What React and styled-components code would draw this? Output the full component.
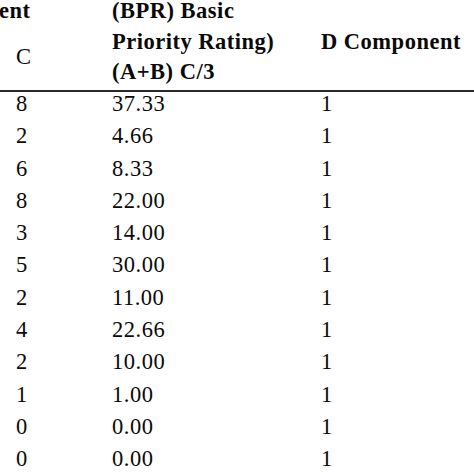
import React from "react";
import styled, { createGlobalStyle } from "styled-components";

const Global = createGlobalStyle`
  html, body { margin: 0; padding: 0; background: #fff; }
  body { width: 474px; height: 474px; overflow: hidden; }
`;

const Table = styled.div`
  width: 474px;
  font-family: "Liberation Serif", "Times New Roman", serif;
  font-size: 22.5px;
  letter-spacing: 0.5px;
  color: #0a0a0a;
`;

const Head = styled.div`
  display: grid;
  grid-template-columns: 112px 209px 1fr;
  margin-top: -4px;
  padding-bottom: 2.5px;
  border-bottom: 2px solid #2a2a2a;
  font-weight: bold;
  line-height: 30.5px;
`;

const HeadFirst = styled.div`
  display: flex;
  flex-direction: column;
`;

const Tail = styled.div`
  margin-left: -1px;
`;

const HeadC = styled.div`
  flex: 1;
  display: flex;
  align-items: center;
  padding-left: 16px;
  font-weight: normal;
`;

const HeadCell = styled.div`
  display: flex;
  flex-direction: column;
  justify-content: center;
  white-space: nowrap;
`;

const Body = styled.div`
  display: grid;
  grid-template-columns: 112px 209px 1fr;
  row-gap: 8.3px;
  line-height: 24px;
`;

const Cell = styled.div`
  padding-left: ${(p) => (p.$first ? "16px" : "0")};
  white-space: nowrap;
`;

const rows = [
  ["8", "37.33", "1"],
  ["2", "4.66", "1"],
  ["6", "8.33", "1"],
  ["8", "22.00", "1"],
  ["3", "14.00", "1"],
  ["5", "30.00", "1"],
  ["2", "11.00", "1"],
  ["4", "22.66", "1"],
  ["2", "10.00", "1"],
  ["1", "1.00", "1"],
  ["0", "0.00", "1"],
  ["0", "0.00", "1"],
];

export default function App() {
  return (
    <>
      <Global />
      <Table>
        <Head>
          <HeadFirst>
            <Tail>ent</Tail>
            <HeadC>C</HeadC>
          </HeadFirst>
          <HeadCell>
            <div>(BPR) Basic</div>
            <div>Priority Rating)</div>
            <div>(A+B) C/3</div>
          </HeadCell>
          <HeadCell>
            <div>D Component</div>
          </HeadCell>
        </Head>
        <Body>
          {rows.map((r, i) => (
            <React.Fragment key={i}>
              <Cell $first>{r[0]}</Cell>
              <Cell>{r[1]}</Cell>
              <Cell>{r[2]}</Cell>
            </React.Fragment>
          ))}
        </Body>
      </Table>
    </>
  );
}
